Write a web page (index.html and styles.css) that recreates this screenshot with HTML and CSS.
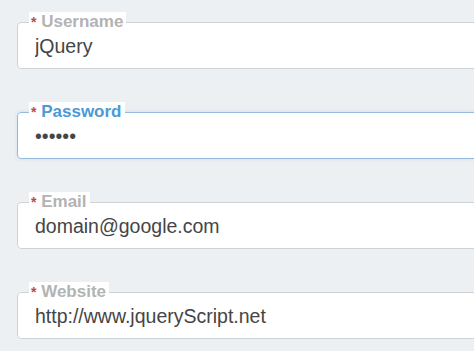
FILE: index.html
```html
<!DOCTYPE html>
<html>
<head>
<meta charset="utf-8">
<link rel="stylesheet" href="styles.css">
</head>
<body>
<form class="form">
  <fieldset class="field">
    <legend class="field-label"><span class="req">*</span> Username</legend>
    <input class="field-input" type="text" value="jQuery">
  </fieldset>
  <fieldset class="field field--focus">
    <legend class="field-label"><span class="req">*</span> Password</legend>
    <input class="field-input" type="password" value="123456">
  </fieldset>
  <fieldset class="field">
    <legend class="field-label"><span class="req">*</span> Email</legend>
    <input class="field-input" type="text" value="domain@google.com">
  </fieldset>
  <fieldset class="field">
    <legend class="field-label"><span class="req">*</span> Website</legend>
    <input class="field-input" type="text" value="http://www.jqueryScript.net">
  </fieldset>
</form>
</body>
</html>
```
FILE: styles.css
```css
html, body {
  margin: 0;
  padding: 0;
}
body {
  background: #edf0f2;
  font-family: "Liberation Sans", Arial, sans-serif;
  width: 474px;
  height: 351px;
  overflow: hidden;
}
.form {
  display: flex;
  flex-direction: column;
  gap: 33px;
  padding: 12px 0 0 17px;
}
.field {
  margin: 0;
  width: 480px;
  height: 57px;
  box-sizing: border-box;
  border: 1px solid #cfd3d6;
  border-radius: 4px;
  background: #ffffff;
  padding: 2px 0 0 17px;
  margin-right: -40px;
}
.field--focus {
  border-color: #97bbdc;
  box-shadow: 0 0 3px 1px #d3e3f2;
}
.field-label {
  margin-left: -6px;
  padding: 0 3px 0 2px;
  background: #ffffff;
  font-size: 17px;
  line-height: 20px;
  font-weight: bold;
  color: #b3b3b3;
}
.field--focus .field-label {
  color: #4b9ad6;
}
.req {
  color: #b94a48;
  font-size: 14px;
}
.field-input {
  display: block;
  border: 0;
  outline: 0;
  padding: 0;
  margin: 0;
  width: 430px;
  height: 24px;
  background: transparent;
  font-family: "Liberation Sans", Arial, sans-serif;
  font-size: 19.5px;
  color: #454545;
}
```
